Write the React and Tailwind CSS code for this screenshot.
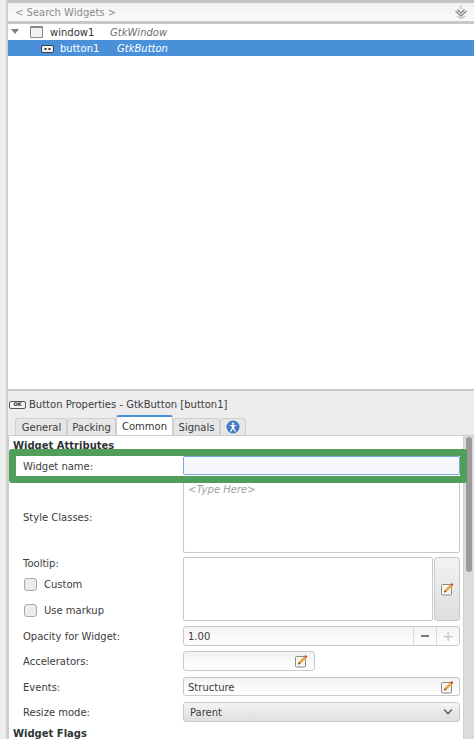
const font = { fontFamily: '"DejaVu Sans", sans-serif' }

function EditIcon() {
  return (
    <svg width="14" height="14" viewBox="0 0 14 14">
      <rect x="1.5" y="2.5" width="10" height="10.5" rx="1" fill="#f7f5ee" stroke="#8a8a86" />
      <path d="M4 10.5 L4.8 8 L10.5 2.2 L12.2 4 L6.5 9.7 Z" fill="#e8a33a" />
      <path d="M10.5 2.2 L11.6 1 L13.3 2.8 L12.2 4 Z" fill="#c8322c" />
      <path d="M4 10.5 L4.8 8 L6.5 9.7 Z" fill="#5a4a33" />
    </svg>
  )
}

function Row({ label, height, top, children }) {
  return (
    <div className="flex" style={{ height, marginTop: top }}>
      <div className="flex w-[174px] shrink-0 items-center pl-[14px] pt-[1px] text-[#3c3c3c]">{label}</div>
      {children}
    </div>
  )
}

const inputBox = 'rounded-[3px] border border-[#c8c8c8] bg-gradient-to-b from-[#f3f3f3] to-white'

export default function App() {
  return (
    <div className="flex h-[739px] w-[474px] overflow-hidden bg-[#ededed] text-[10px] text-[#2e3436]" style={font}>
      {/* left pane edge */}
      <div className="flex w-[8px] shrink-0 justify-end">
        <div className="w-[2px] bg-[#cfcfcf]" />
      </div>

      <div className="flex min-w-0 flex-1 flex-col">
        {/* search bar */}
        <div className="flex h-[24px] shrink-0 items-center justify-between border-t-[3px] border-b-[3px] border-t-[#c4c4c4] border-b-[#c8c8c8] bg-gradient-to-b from-[#f1f1f1] to-[#fbfbfb] pl-[7px] pr-[6px]">
          <span className="text-[#8c8c8c]">&lt; Search Widgets &gt;</span>
          <svg width="14" height="14" viewBox="0 0 14 14" fill="none" stroke="#8a8a8a" strokeWidth="1.3">
            <path d="M1.5 6 L7 11 L12.5 6" />
            <path d="M3.5 4.5 L7 8 L10.5 4.5" />
            <path d="M7 0.5 V4" strokeDasharray="1 1" />
            <path d="M3 11 L7 13.5 L11 11" stroke="#bcbcbc" />
          </svg>
        </div>

        {/* widget tree */}
        <div className="h-[367px] shrink-0 border-b-2 border-[#c9c9c9] bg-white">
          <div className="flex h-[16px] items-center">
            <svg className="ml-[3px]" width="8" height="6" viewBox="0 0 8 6">
              <path d="M0 0 H8 L4 5 Z" fill="#7d7d7d" />
            </svg>
            <span className="ml-[11px] h-[12px] w-[13px] rounded-[1px] border border-t-2 border-[#888] bg-[#f1f1f1]" />
            <span className="ml-[7px] w-[60px] text-[#2e3436]">window1</span>
            <span className="italic text-[#6f6f6f]">GtkWindow</span>
          </div>
          <div className="flex h-[16px] items-center bg-[#4a90d9] pt-[1px] text-white">
            <svg className="ml-[33px]" width="13" height="8" viewBox="0 0 13 8">
              <rect x="0.5" y="0.5" width="12" height="7" rx="1.5" fill="#f2f2f2" stroke="#3a3f46" />
              <rect x="3.5" y="3" width="2" height="2" fill="#333" />
              <rect x="7.5" y="3" width="2" height="2" fill="#333" />
            </svg>
            <span className="ml-[6px] w-[57px]">button1</span>
            <span className="italic">GtkButton</span>
          </div>
        </div>

        {/* properties header */}
        <div className="flex h-[24px] shrink-0 items-center pl-[1px] pt-[3px]">
          <span className="flex h-[8px] w-[17px] items-center justify-center rounded-[2px] border border-[#555] bg-[#f4f4f4] text-[5px] font-bold leading-none text-[#222]">
            OK
          </span>
          <span className="ml-[3px] text-[#3c3c3c]">Button Properties - GtkButton [button1]</span>
        </div>

        {/* tabs */}
        <div className="flex h-[20px] shrink-0 items-end pl-[7px] text-[#3c3c3c]">
          <div className="flex h-[17px] w-[52px] items-center justify-center rounded-t-[3px] border border-b-0 border-[#cfcfcf] bg-[#e6e6e6] pl-[1px] pt-[1px]">General</div>
          <div className="flex h-[17px] w-[49px] items-center justify-center rounded-t-[3px] border border-b-0 border-[#cfcfcf] bg-[#e6e6e6] pt-[1px]">Packing</div>
          <div className="flex h-[20px] w-[57px] items-center justify-center rounded-t-[3px] border border-b-0 border-t-2 border-[#cdcdcd] border-t-[#4a90d9] bg-white pt-[1px] text-[#2e3436]">Common</div>
          <div className="flex h-[17px] w-[47px] items-center justify-center rounded-t-[3px] border border-b-0 border-[#cfcfcf] bg-[#e6e6e6] pt-[1px]">Signals</div>
          <div className="flex h-[17px] w-[26px] items-center justify-center rounded-t-[3px] border border-b-0 border-[#cfcfcf] bg-[#e6e6e6]">
            <svg width="14" height="14" viewBox="0 0 14 14">
              <circle cx="7" cy="7" r="6.5" fill="#3f78c4" />
              <circle cx="7" cy="3.6" r="1.2" fill="#fff" />
              <path d="M3 5 H11 L8.2 6.6 V8 L10 11.4 L8.8 11.8 L7 8.8 L5.2 11.8 L4 11.4 L5.8 8 V6.6 Z" fill="#fff" />
            </svg>
          </div>
        </div>

        {/* notebook page */}
        <div className="relative flex min-h-0 flex-1 border-t border-l border-[#cdcdcd] bg-white">
          <div className="min-w-0 flex-1">
            <div className="h-[18px] pl-[4px] pt-[2px] font-bold leading-[16px] text-[#2e3436]">Widget Attributes</div>

            <Row label="Widget name:" height={19} top={2}>
              <div className="w-[277px] rounded-[2px] border border-[#7ea8d6] bg-[#f6f7fa]" />
            </Row>

            <Row label="Style Classes:" height={73} top={5}>
              <div className="w-[277px] rounded-[2px] border border-[#c8c8c8] bg-white px-[4px] italic leading-[18px] text-[#a0a0a0]">&lt;Type Here&gt;</div>
            </Row>

            <div className="mt-[4px] flex h-[64px]">
              <div className="w-[174px] shrink-0 pl-[14px] text-[#3c3c3c]">
                <div className="leading-[13px]">Tooltip:</div>
                <div className="mt-[7px] flex items-center">
                  <span className="ml-[1px] h-[13px] w-[13px] rounded-[3px] border border-[#a8a8a8] bg-[#ececec]" />
                  <span className="ml-[7px]">Custom</span>
                </div>
                <div className="mt-[11px] flex items-center">
                  <span className="ml-[1px] h-[13px] w-[13px] rounded-[3px] border border-[#a8a8a8] bg-[#ececec]" />
                  <span className="ml-[7px]">Use markup</span>
                </div>
              </div>
              <div className="w-[250px] rounded-[2px] border border-[#c8c8c8] bg-white" />
              <div className="ml-[1px] flex w-[26px] items-center justify-center rounded-[3px] border border-[#c8c8c8] bg-gradient-to-b from-[#f3f3f3] to-[#dedede]">
                <EditIcon />
              </div>
            </div>

            <Row label="Opacity for Widget:" height={20} top={5}>
              <div className={`flex w-[277px] items-center ${inputBox}`}>
                <span className="flex-1 pl-[4px] text-[#3c3c3c]">1.00</span>
                <span className="flex h-full w-[23px] items-center justify-center border-l border-[#dcdcdc]">
                  <span className="h-[2px] w-[8px] bg-[#777]" />
                </span>
                <span className="flex h-full w-[23px] items-center justify-center border-l border-[#dcdcdc] text-[14px] leading-none text-[#c4c4c4]">+</span>
              </div>
            </Row>

            <Row label="Accelerators:" height={20} top={5}>
              <div className={`flex w-[132px] items-center justify-end pr-[6px] ${inputBox}`}>
                <EditIcon />
              </div>
            </Row>

            <Row label="Events:" height={19} top={6}>
              <div className={`flex w-[277px] items-center justify-between pl-[4px] pr-[5px] text-[#3c3c3c] ${inputBox}`}>
                <span className="pt-[1px]">Structure</span>
                <EditIcon />
              </div>
            </Row>

            <Row label="Resize mode:" height={20} top={6}>
              <div className="flex w-[277px] items-center justify-between rounded-[3px] border border-[#c8c8c8] bg-gradient-to-b from-[#f4f4f4] to-[#dfdfdf] pl-[6px] pr-[5px] text-[#3c3c3c]">
                <span>Parent</span>
                <svg width="12" height="8" viewBox="0 0 12 8" fill="none" stroke="#666" strokeWidth="1.6">
                  <path d="M2 1.5 L6 5.5 L10 1.5" />
                </svg>
              </div>
            </Row>

            <div className="mt-[5px] pl-[4px] font-bold leading-[14px] text-[#2e3436]">Widget Flags</div>
          </div>

          {/* scrollbar */}
          <div className="w-[11px] shrink-0 border-l border-[#d0d0d0] bg-[#dcdcdc] pl-[2px] pt-[1px]">
            <div className="h-[135px] w-[6px] rounded-[3px] bg-[#9a9a9a]" />
          </div>

          {/* green highlight around the widget name row */}
          <div className="absolute left-0 top-[13px] h-[34px] w-[458px] rounded-[3px] border-[7px] border-[#4f9f5a]" />
        </div>
      </div>
    </div>
  )
}
